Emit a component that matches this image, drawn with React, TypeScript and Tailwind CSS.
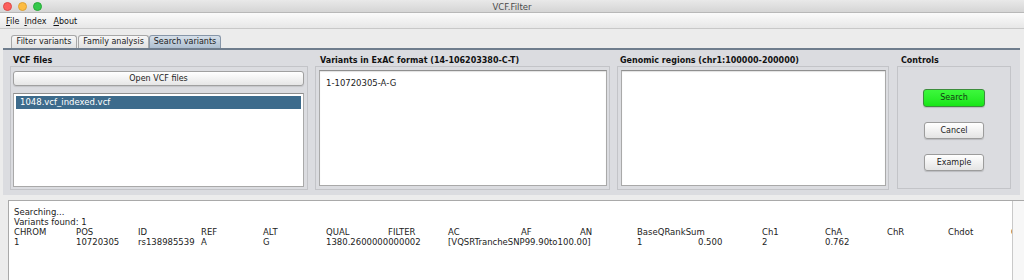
import React from "react";

const headerCols = [
  { t: "CHROM", w: "w-[62px]" },
  { t: "POS", w: "w-[62px]" },
  { t: "ID", w: "w-[63px]" },
  { t: "REF", w: "w-[62px]" },
  { t: "ALT", w: "w-[63px]" },
  { t: "QUAL", w: "w-[62px]" },
  { t: "FILTER", w: "w-[60px]" },
  { t: "AC", w: "w-[73px]" },
  { t: "AF", w: "w-[59px]" },
  { t: "AN", w: "w-[57px]" },
  { t: "BaseQRankSum", w: "w-[125px]" },
  { t: "Ch1", w: "w-[63px]" },
  { t: "ChA", w: "w-[62px]" },
  { t: "ChR", w: "w-[61px]" },
  { t: "Chdot", w: "w-[63px]" },
  { t: "C", w: "w-[10px]" },
];

const dataCols = [
  { t: "1", w: "w-[62px]" },
  { t: "10720305", w: "w-[62px]" },
  { t: "rs138985539", w: "w-[63px]" },
  { t: "A", w: "w-[62px]" },
  { t: "G", w: "w-[63px]" },
  { t: "1380.2600000000002", w: "w-[122px]" },
  { t: "[VQSRTrancheSNP99.90to100.00]", w: "w-[189px]" },
  { t: "1", w: "w-[61px]" },
  { t: "0.500", w: "w-[64px]" },
  { t: "2", w: "w-[63px]" },
  { t: "0.762", w: "w-[60px]" },
];

function Mnemonic({ first, rest }: { first: string; rest: string }) {
  return (
    <span>
      <span className="underline underline-offset-1">{first}</span>
      {rest}
    </span>
  );
}

function MacButton({ label, green }: { label: string; green?: boolean }) {
  return (
    <div
      className={`flex items-center justify-center rounded-[3px] border text-[8px] shadow-[0_1px_1px_rgba(0,0,0,0.15)] ${
        green
          ? "w-[62px] h-[18px] border-[#3d8d3d] bg-gradient-to-b from-[#3cf83c] to-[#16e616] text-[#143a14]"
          : "w-[60px] h-[17px] border-[#9c9c9c] bg-gradient-to-b from-[#ffffff] to-[#e4e4e4] text-[#222]"
      }`}
    >
      {label}
    </div>
  );
}

function TextArea({ children }: { children?: React.ReactNode }) {
  return (
    <div className="flex-1 m-[3px] mr-[2px] border border-[#a9a9a9] border-t-[#8f8f8f] bg-white shadow-[inset_0_1px_1px_rgba(0,0,0,0.12)] px-[6px] pt-[7px] text-[8.5px] leading-[11px] text-[#222]">
      {children}
    </div>
  );
}

export default function App() {
  return (
    <div className="w-[1024px] h-[280px] overflow-hidden bg-[#ececec] font-['DejaVu_Sans',sans-serif] text-[8px] text-[#111] flex flex-col">
      {/* Title bar */}
      <div className="h-[13px] shrink-0 grid grid-cols-[1fr_auto_1fr] items-center bg-gradient-to-b from-[#e9e9e9] to-[#d5d5d5] border-b border-[#b8b8b8]">
        <div className="flex gap-[6px] pl-[3px] items-center">
          <span className="w-[9px] h-[9px] rounded-full bg-[#fc605c] border border-[#de4a46]" />
          <span className="w-[9px] h-[9px] rounded-full bg-[#fdbc40] border border-[#dea236]" />
          <span className="w-[9px] h-[9px] rounded-full bg-[#34c84a] border border-[#27aa37]" />
        </div>
        <div className="pt-[2px] text-[8.5px] text-[#4a4a4a] leading-none">VCF.Filter</div>
        <div />
      </div>

      {/* Menu bar */}
      <div className="h-[16px] shrink-0 flex items-center gap-[5px] pl-[6px] pt-[3px] bg-gradient-to-b from-[#fbfbfb] to-[#e7e7e7] border-b border-[#c8c8c8] leading-none">
        <Mnemonic first="F" rest="ile" />
        <Mnemonic first="I" rest="ndex" />
        <span className="ml-[2px]">
          <Mnemonic first="A" rest="bout" />
        </span>
      </div>

      {/* Tabs */}
      <div className="flex pl-[11px] pt-[6px] shrink-0">
        <div className="w-[66px] h-[13px] flex items-center justify-center border border-b-0 border-[#a7a7a7] rounded-t-[3px] bg-gradient-to-b from-[#f7f7f7] to-[#e2e2e2] text-[#222] leading-none">
          Filter variants
        </div>
        <div className="w-[71px] h-[13px] ml-[1px] flex items-center justify-center border border-b-0 border-[#a7a7a7] rounded-t-[3px] bg-gradient-to-b from-[#f7f7f7] to-[#e2e2e2] text-[#222] leading-none">
          Family analysis
        </div>
        <div className="w-[72px] h-[13px] flex items-center justify-center border border-b-0 border-[#8796a8] rounded-t-[3px] bg-gradient-to-b from-[#d6e0ea] to-[#aebfd0] text-[#1b1b1b] leading-none">
          Search variants
        </div>
      </div>

      {/* Content panel */}
      <div className="mx-[3px] mr-[4px] h-[147px] shrink-0 border-t-2 border-[#6f7d8d] bg-[#dbdce0] flex gap-[7px] pl-[7px] pt-[5px]">
        {/* VCF files */}
        <div className="w-[298px] flex flex-col">
          <div className="h-[11px] pl-[3px] font-bold leading-[11px]">VCF files</div>
          <div className="h-[124px] border border-[#c3c4c8] flex flex-col px-[2px] pt-[4px] pb-[2px] gap-[7px]">
            <div className="h-[15px] mr-[1px] rounded-[3px] border border-[#a0a0a0] bg-gradient-to-b from-[#ffffff] to-[#e6e6e6] flex items-center justify-center text-[#222] shadow-[0_1px_1px_rgba(0,0,0,0.1)]">
              Open VCF files
            </div>
            <div className="flex-1 mr-[1px] border border-[#a9a9a9] border-t-[#8f8f8f] bg-white p-[2px]">
              <div className="h-[13px] bg-[#3d6b8c] text-white text-[8.5px] flex items-center pl-[4px] leading-none">
                1048.vcf_indexed.vcf
              </div>
            </div>
          </div>
        </div>

        {/* Variants */}
        <div className="w-[295px] flex flex-col">
          <div className="h-[11px] pl-[5px] font-bold leading-[11px]">
            Variants in ExAC format (14-106203380-C-T)
          </div>
          <div className="h-[124px] border border-[#c3c4c8] flex">
            <TextArea>1-10720305-A-G</TextArea>
          </div>
        </div>

        {/* Genomic regions */}
        <div className="w-[272px] flex flex-col">
          <div className="h-[11px] pl-[3px] font-bold leading-[11px]">
            Genomic regions (chr1:100000-200000)
          </div>
          <div className="h-[124px] border border-[#c3c4c8] flex">
            <TextArea />
          </div>
        </div>

        {/* Controls */}
        <div className="w-[114px] ml-[1px] flex flex-col">
          <div className="h-[11px] pl-[4px] font-bold leading-[11px]">Controls</div>
          <div className="h-[123px] border border-[#c3c4c8] flex flex-col items-center pt-[22px] gap-[15px]">
            <MacButton label="Search" green />
            <MacButton label="Cancel" />
            <MacButton label="Example" />
          </div>
        </div>
      </div>

      {/* Output */}
      <div className="flex-1 mt-[5px] ml-[8px] flex border-t border-l border-[#a9a9a9]">
        <div className="w-[1004px] shrink-0 overflow-hidden bg-white border-r border-[#c9c9c9] pl-[5px] pt-[6px] text-[8.5px] leading-[10px] text-[#222] whitespace-nowrap">
          <div>Searching...</div>
          <div>Variants found: 1</div>
          <div className="flex">
            {headerCols.map((c) => (
              <span key={c.t} className={`${c.w} shrink-0`}>
                {c.t}
              </span>
            ))}
          </div>
          <div className="flex">
            {dataCols.map((c, i) => (
              <span key={i} className={`${c.w} shrink-0`}>
                {c.t}
              </span>
            ))}
          </div>
        </div>
        <div className="flex-1 bg-[#f7f7f7]" />
      </div>
    </div>
  );
}
